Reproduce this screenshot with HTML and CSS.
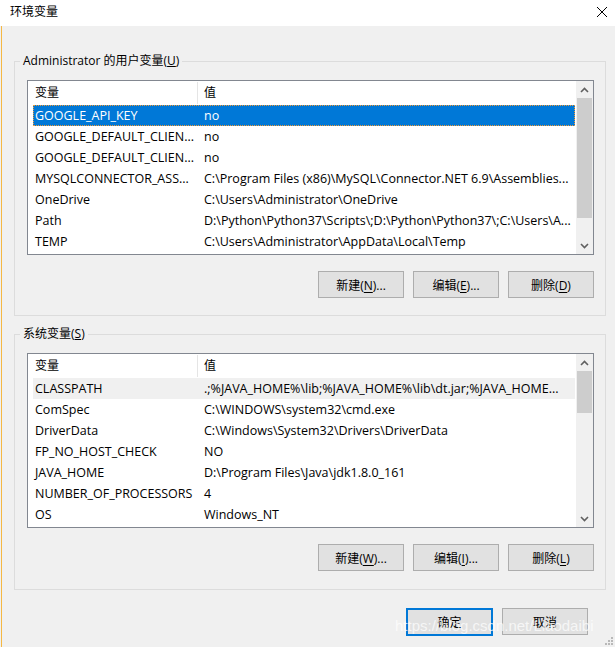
FILE: index.html
```html
<!DOCTYPE html>
<html lang="zh-CN">
<head>
<meta charset="utf-8">
<title>环境变量</title>
<link rel="stylesheet" href="styles.css">
</head>
<body>
<div class="window">
  <div class="titlebar">
    <span class="title">环境变量</span>
    <svg class="close" width="12" height="12" viewBox="0 0 12 12"><path d="M1 1 L11 11 M11 1 L1 11" stroke="#000" stroke-width="1" fill="none"/></svg>
  </div>
  <div class="body">
    <fieldset class="group">
      <legend>Administrator 的用户变量(<u>U</u>)</legend>
      <div class="list">
        <div class="list-main">
          <div class="list-head">
            <div class="head-name">变量</div>
            <div class="head-val">值</div>
          </div>
          <div class="rows">
            <div class="row selected"><span class="c1">GOOGLE_API_KEY</span><span class="c2">no</span></div>
            <div class="row"><span class="c1">GOOGLE_DEFAULT_CLIEN...</span><span class="c2">no</span></div>
            <div class="row"><span class="c1">GOOGLE_DEFAULT_CLIEN...</span><span class="c2">no</span></div>
            <div class="row"><span class="c1">MYSQLCONNECTOR_ASS...</span><span class="c2">C:\Program Files (x86)\MySQL\Connector.NET 6.9\Assemblies...</span></div>
            <div class="row"><span class="c1">OneDrive</span><span class="c2">C:\Users\Administrator\OneDrive</span></div>
            <div class="row"><span class="c1">Path</span><span class="c2">D:\Python\Python37\Scripts\;D:\Python\Python37\;C:\Users\A...</span></div>
            <div class="row"><span class="c1">TEMP</span><span class="c2">C:\Users\Administrator\AppData\Local\Temp</span></div>
          </div>
        </div>
        <div class="scrollbar">
          <div class="arrow"><svg width="9" height="6" viewBox="0 0 9 6"><path d="M1 5 L4.5 1.5 L8 5" stroke="#606060" stroke-width="1.6" fill="none"/></svg></div>
          <div class="track"><div class="thumb thumb-user"></div></div>
          <div class="arrow"><svg width="9" height="6" viewBox="0 0 9 6"><path d="M1 1 L4.5 4.5 L8 1" stroke="#606060" stroke-width="1.6" fill="none"/></svg></div>
        </div>
      </div>
      <div class="btn-row">
        <button class="btn">新建(<u>N</u>)...</button>
        <button class="btn">编辑(<u>E</u>)...</button>
        <button class="btn">删除(<u>D</u>)</button>
      </div>
    </fieldset>

    <fieldset class="group group-sys">
      <legend>系统变量(<u>S</u>)</legend>
      <div class="list">
        <div class="list-main">
          <div class="list-head">
            <div class="head-name">变量</div>
            <div class="head-val">值</div>
          </div>
          <div class="rows">
            <div class="row inactive"><span class="c1">CLASSPATH</span><span class="c2">.;%JAVA_HOME%\lib;%JAVA_HOME%\lib\dt.jar;%JAVA_HOME...</span></div>
            <div class="row"><span class="c1">ComSpec</span><span class="c2">C:\WINDOWS\system32\cmd.exe</span></div>
            <div class="row"><span class="c1">DriverData</span><span class="c2">C:\Windows\System32\Drivers\DriverData</span></div>
            <div class="row"><span class="c1">FP_NO_HOST_CHECK</span><span class="c2">NO</span></div>
            <div class="row"><span class="c1">JAVA_HOME</span><span class="c2">D:\Program Files\Java\jdk1.8.0_161</span></div>
            <div class="row"><span class="c1">NUMBER_OF_PROCESSORS</span><span class="c2">4</span></div>
            <div class="row"><span class="c1">OS</span><span class="c2">Windows_NT</span></div>
          </div>
        </div>
        <div class="scrollbar">
          <div class="arrow"><svg width="9" height="6" viewBox="0 0 9 6"><path d="M1 5 L4.5 1.5 L8 5" stroke="#606060" stroke-width="1.6" fill="none"/></svg></div>
          <div class="track"><div class="thumb thumb-sys"></div></div>
          <div class="arrow"><svg width="9" height="6" viewBox="0 0 9 6"><path d="M1 1 L4.5 4.5 L8 1" stroke="#606060" stroke-width="1.6" fill="none"/></svg></div>
        </div>
      </div>
      <div class="btn-row">
        <button class="btn">新建(<u>W</u>)...</button>
        <button class="btn">编辑(<u>I</u>)...</button>
        <button class="btn">删除(<u>L</u>)</button>
      </div>
    </fieldset>

    <div class="dialog-buttons">
      <button class="btn primary">确定</button>
      <button class="btn">取消</button>
    </div>
  </div>
  <div class="watermark">https://blog.csdn.net/Liaodaibi</div>
  <svg class="grip" width="12" height="12" viewBox="0 0 12 12">
    <rect x="9" y="3" width="2" height="2" fill="#b8b8b8"/>
    <rect x="6" y="6" width="2" height="2" fill="#b8b8b8"/>
    <rect x="9" y="6" width="2" height="2" fill="#b8b8b8"/>
    <rect x="3" y="9" width="2" height="2" fill="#b8b8b8"/>
    <rect x="6" y="9" width="2" height="2" fill="#b8b8b8"/>
    <rect x="9" y="9" width="2" height="2" fill="#b8b8b8"/>
  </svg>
</div>
</body>
</html>
```
FILE: styles.css
```css
* { box-sizing: border-box; }

html, body {
  margin: 0;
  padding: 0;
}

body {
  width: 615px;
  height: 647px;
  overflow: hidden;
  background: #f0f0f0;
  font-family: "Open Sans", "Noto Sans CJK SC", sans-serif;
  font-size: 12px;
  color: #000;
}

.window {
  position: relative;
  width: 615px;
  height: 647px;
}

.titlebar {
  height: 26px;
  background: #fff;
  display: flex;
  align-items: center;
  justify-content: space-between;
  padding: 0 7px 2px 10px;
}

.title {
  font-size: 12px;
  line-height: 16px;
}

.body {
  margin-left: 1px;
  border-left: 1px solid #f5b843;
  height: 621px;
  display: flex;
  flex-direction: column;
}

.group {
  margin: 27px 9px 0 12px;
  padding: 11px 11px 17px 12px;
  border: 1px solid #dcdcdc;
  min-width: 0;
}

.group-sys {
  margin-top: 10px;
  padding-bottom: 18px;
}

.group legend {
  padding: 0 3px;
  margin-left: -7px;
  line-height: 16px;
}

.list {
  height: 175px;
  border: 1px solid #828790;
  background: #fff;
  display: flex;
}

.list-main {
  flex: 1;
  min-width: 0;
  display: flex;
  flex-direction: column;
}

.list-head {
  height: 24px;
  display: flex;
  align-items: center;
}

.head-name {
  width: 170px;
  padding-left: 7px;
  border-right: 1px solid #e5e5e5;
  height: 22px;
  line-height: 22px;
}

.head-val {
  padding-left: 6px;
  line-height: 22px;
}

.rows {
  padding: 0 1px 0 5px;
}

.row {
  height: 21px;
  line-height: 22px;
  font-size: 12.5px;
  display: grid;
  grid-template-columns: 169px 1fr;
}

.row .c1,
.row .c2 {
  padding-left: 2px;
  white-space: nowrap;
  overflow: hidden;
  text-overflow: ellipsis;
}

.row.selected {
  background: #0078d7;
  color: #fff;
  outline: 1px dotted #f09a36;
  outline-offset: -1px;
}

.row.inactive {
  background: #f0f0f0;
}

.scrollbar {
  width: 17px;
  background: #f0f0f0;
  display: flex;
  flex-direction: column;
}

.arrow {
  height: 17px;
  display: flex;
  align-items: center;
  justify-content: center;
}

.track {
  flex: 1;
  padding: 0 1px;
}

.thumb {
  background: #cdcdcd;
}

.thumb-user { height: 120px; }
.thumb-sys { height: 42px; }

.btn-row {
  display: flex;
  justify-content: flex-end;
  gap: 9px;
  margin-top: 16px;
}

.btn {
  width: 86px;
  height: 27px;
  padding: 0;
  background: #e1e1e1;
  border: 1px solid #adadad;
  font-family: inherit;
  font-size: 12px;
  color: #000;
}

.btn u {
  text-underline-offset: 2px;
}

.btn.primary {
  width: 87px;
  height: 28px;
  border: 2px solid #0078d7;
}

.dialog-buttons {
  display: flex;
  justify-content: flex-end;
  gap: 9px;
  margin: 18px 27px 0 0;
  align-items: flex-start;
}

.watermark {
  position: absolute;
  left: 395px;
  top: 616px;
  font-family: "Liberation Sans", sans-serif;
  font-size: 15px;
  line-height: 20px;
  color: rgba(255, 255, 255, 0.72);
  pointer-events: none;
}

.grip {
  position: absolute;
  right: 1px;
  bottom: 1px;
}
```
